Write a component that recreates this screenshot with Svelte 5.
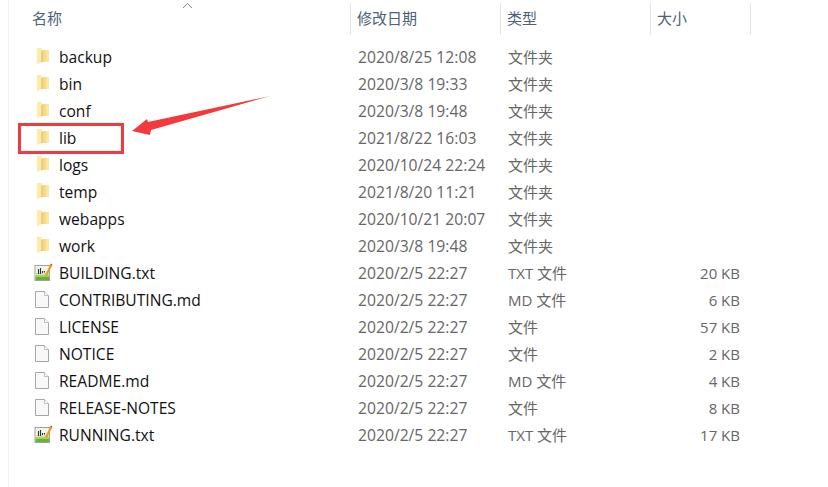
<script lang="ts">
  type Row = { name: string; date: string; type: string; size?: string; icon: "folder" | "file" | "txt" };

  const rows: Row[] = [
    { name: "backup", date: "2020/8/25 12:08", type: "文件夹", icon: "folder" },
    { name: "bin", date: "2020/3/8 19:33", type: "文件夹", icon: "folder" },
    { name: "conf", date: "2020/3/8 19:48", type: "文件夹", icon: "folder" },
    { name: "lib", date: "2021/8/22 16:03", type: "文件夹", icon: "folder" },
    { name: "logs", date: "2020/10/24 22:24", type: "文件夹", icon: "folder" },
    { name: "temp", date: "2021/8/20 11:21", type: "文件夹", icon: "folder" },
    { name: "webapps", date: "2020/10/21 20:07", type: "文件夹", icon: "folder" },
    { name: "work", date: "2020/3/8 19:48", type: "文件夹", icon: "folder" },
    { name: "BUILDING.txt", date: "2020/2/5 22:27", type: "TXT 文件", size: "20 KB", icon: "txt" },
    { name: "CONTRIBUTING.md", date: "2020/2/5 22:27", type: "MD 文件", size: "6 KB", icon: "file" },
    { name: "LICENSE", date: "2020/2/5 22:27", type: "文件", size: "57 KB", icon: "file" },
    { name: "NOTICE", date: "2020/2/5 22:27", type: "文件", size: "2 KB", icon: "file" },
    { name: "README.md", date: "2020/2/5 22:27", type: "MD 文件", size: "4 KB", icon: "file" },
    { name: "RELEASE-NOTES", date: "2020/2/5 22:27", type: "文件", size: "8 KB", icon: "file" },
    { name: "RUNNING.txt", date: "2020/2/5 22:27", type: "TXT 文件", size: "17 KB", icon: "txt" },
  ];
</script>

<div class="page">
  <div class="explorer">
    <header class="head">
      <div class="col col--name">名称</div>
      <div class="col">修改日期</div>
      <div class="col">类型</div>
      <div class="col">大小</div>
    </header>

    <svg class="sort" width="12" height="7" viewBox="0 0 12 7" aria-hidden="true">
      <path d="M1 6 L5.5 1.5 L10 6" fill="none" stroke="#8a8a8a" stroke-width="1" />
    </svg>

    <ul class="list">
      {#each rows as row}
        <li class="row">
          <div class="name">
            <span class="icon">
              {#if row.icon === "folder"}
                <svg width="16" height="18" viewBox="0 0 16 18" aria-hidden="true">
                  <path d="M6 2 H15 V14 H6 Z" fill="#f8da84" />
                  <path d="M12 2 H15 V14 H12 Z" fill="#fbe6a4" />
                  <path d="M3 0 H7.5 L8 3 V13.5 L3.5 16 H3 Z" fill="#fdeaae" />
                  <path d="M8 3 V13.5 L7 14" fill="none" stroke="#e2b856" stroke-width="1" />
                </svg>
              {:else if row.icon === "file"}
                <svg width="16" height="19" viewBox="0 0 16 19" aria-hidden="true">
                  <path d="M1.5 1.5 H10.5 L14.5 5.5 V17.5 H1.5 Z" fill="#f8f8f8" stroke="#a6a6a6" />
                  <path d="M10.5 1.5 V5.5 H14.5" fill="#fff" stroke="#bdbdbd" />
                </svg>
              {:else}
                <svg width="19" height="19" viewBox="0 0 19 19" aria-hidden="true">
                  <rect x="1" y="2.5" width="14.5" height="15" fill="#f2f5ea" stroke="#a0a0a0" />
                  <rect x="1.5" y="10" width="13.5" height="2" fill="#d2e6ae" />
                  <rect x="1.5" y="12" width="13.5" height="2" fill="#a5d26c" />
                  <rect x="1.5" y="14" width="13.5" height="3" fill="#66b52c" />
                  <path d="M4.5 6 V11 M6.5 5 V11 M8.5 8 V10 M10.5 8 V9.5" stroke="#333" stroke-width="1.1" />
                  <path d="M17.5 1.5 L12 12.5" stroke="#ee9a26" stroke-width="2.2" />
                  <path d="M17 .6 L18.4 1.4 L17.8 2.6 L16.4 1.9 Z" fill="#c9463c" />
                </svg>
              {/if}
            </span>
            <span>{row.name}</span>
          </div>
          <div class="cell">{row.date}</div>
          <div class="cell cjk">{row.type}</div>
          <div class="cell size">{row.size ?? ""}</div>
        </li>
      {/each}
    </ul>

    <div class="mark"></div>
    <svg class="arrow" width="150" height="44" viewBox="0 0 150 44" aria-hidden="true">
      <path d="M8 35 L23 23 L24 26 L146 0 L27 34 L26 39 Z" fill="#f4393c" />
    </svg>
  </div>
</div>

<style>
  :global(body) {
    margin: 0;
    background: #fff;
  }
  .page {
    width: 828px;
    height: 487px;
    overflow: hidden;
    font-family: "Open Sans", "Noto Sans CJK SC", sans-serif;
  }
  .explorer {
    position: relative;
    margin-left: 8px;
    height: 487px;
    border-left: 1px solid #f1f1f1;
    box-sizing: border-box;
  }
  .head {
    display: grid;
    grid-template-columns: 342px 150px 150px 100px;
    padding-top: 3px;
    height: 32px;
    font-family: "Noto Sans CJK SC", sans-serif;
    font-size: 15px;
    color: #4c607a;
  }
  .col {
    display: flex;
    align-items: center;
    padding-left: 6px;
    border-right: 1px solid #e5e5e5;
    padding-bottom: 3px;
  }
  .col--name {
    padding-left: 23px;
  }
  .sort {
    position: absolute;
    left: 173px;
    top: 2px;
  }
  .list {
    list-style: none;
    margin: 8px 0 0;
    padding: 0;
  }
  .row {
    display: grid;
    grid-template-columns: 342px 150px 150px 100px;
    height: 27px;
    align-items: center;
    font-size: 15.7px;
    color: #666;
  }
  .name {
    display: flex;
    align-items: center;
    color: #111;
    font-size: 15.6px;
  }
  .icon {
    width: 50px;
    padding-left: 25px;
    box-sizing: border-box;
    display: flex;
    align-items: center;
    height: 20px;
  }
  .cell {
    padding-left: 7px;
    white-space: nowrap;
  }
  .cjk {
    font-size: 15px;
  }
  .size {
    text-align: right;
    padding-right: 11px;
    font-size: 15px;
  }
  .mark {
    position: absolute;
    left: 9px;
    top: 123px;
    width: 106px;
    height: 31px;
    border: 3px solid #ef3b3e;
    box-sizing: border-box;
  }
  .arrow {
    position: absolute;
    left: 115px;
    top: 96px;
  }
</style>
